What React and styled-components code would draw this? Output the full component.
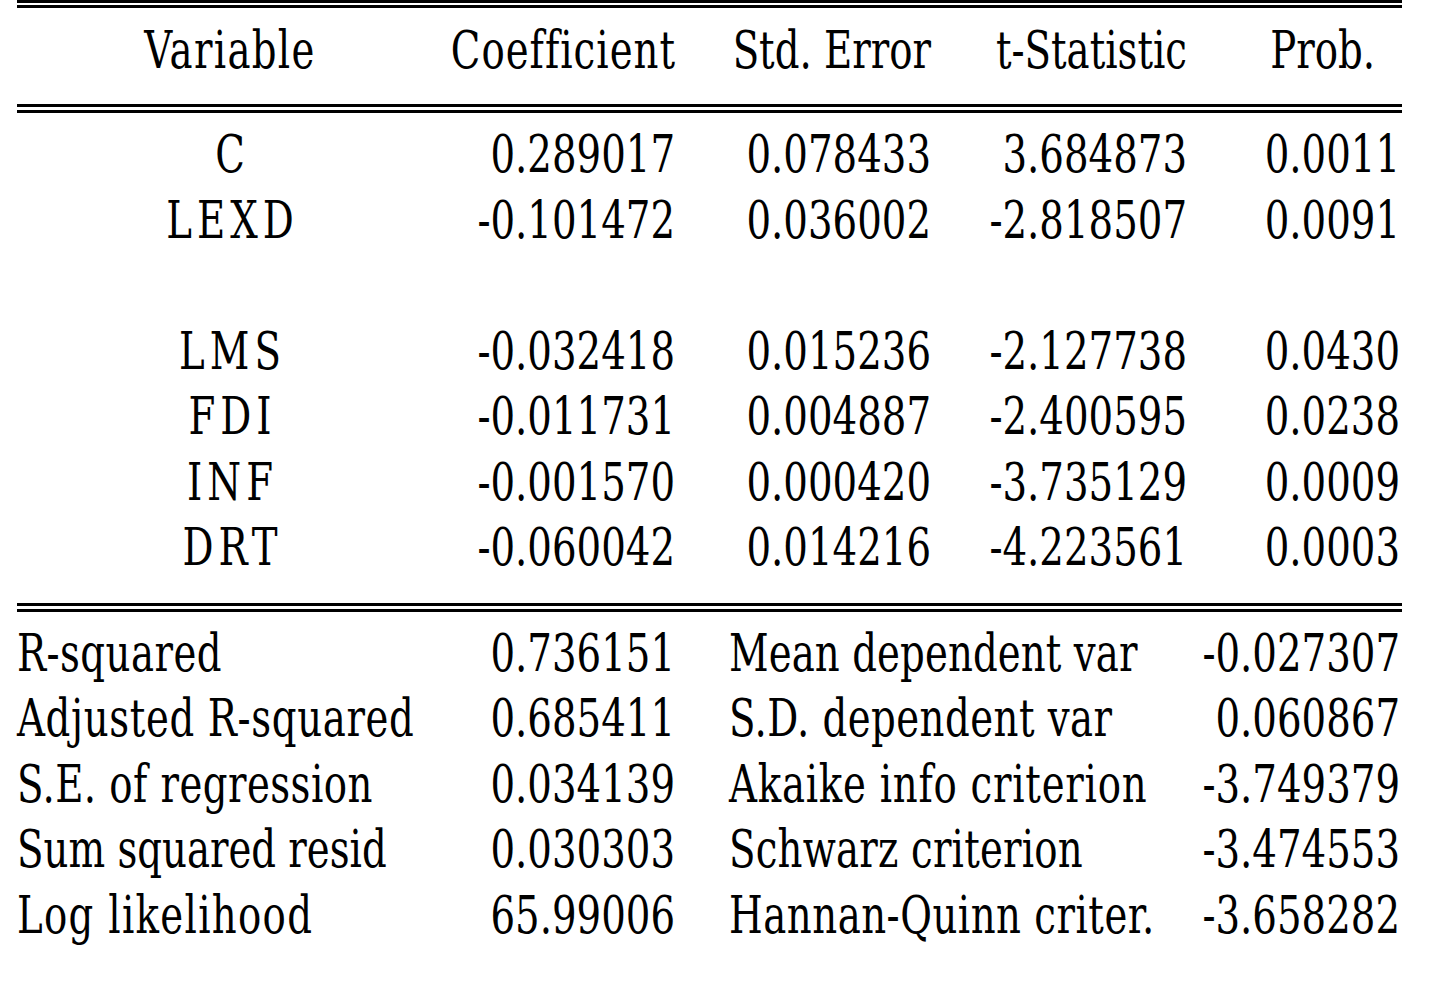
import React from 'react'
import styled, { createGlobalStyle } from 'styled-components'

const GlobalStyle = createGlobalStyle`
  html, body {
    margin: 0;
    padding: 0;
    background: #ffffff;
  }
  body {
    font-family: "DejaVu Serif Condensed", "DejaVu Serif", serif;
    font-stretch: condensed;
    color: #000000;
  }
`

// column template shared by header, coefficient rows and the stats block
const COLUMNS = '426px 232px 256px 256px 1fr'

const Table = styled.div`
  margin-left: 17px;
  width: 1385px;
  border-top: 8px double #000;
  font-size: 43px;
`

const Header = styled.div`
  display: grid;
  grid-template-columns: ${COLUMNS};
  height: 105px;
  align-items: center;
  padding: 0 2px 12px 0;
  box-sizing: border-box;
  border-bottom: 9px double #000;
`

const Section = styled.div`
  padding: ${({ $top }) => $top}px 0 ${({ $bottom }) => $bottom}px;
  border-bottom: ${({ $ruled }) => ($ruled ? '9px double #000' : 'none')};
`

const Row = styled.div`
  display: grid;
  grid-template-columns: ${COLUMNS};
  height: 65.5px;
  align-items: center;
  padding-right: 2px;
`

const Cell = styled.div`
  text-align: ${({ $align }) => $align || 'right'};
  padding-left: ${({ $pl }) => $pl || 0}px;
  padding-right: ${({ $pr }) => $pr || 0}px;
  grid-column: ${({ $span }) => ($span ? `span ${$span}` : 'auto')};
  white-space: nowrap;
  line-height: 1;
`

const Text = styled.span`
  display: inline-block;
  letter-spacing: ${({ $spacing }) => $spacing || 0}px;
  margin-right: ${({ $trim }) => ($trim ? `-${$trim}px` : 0)};
  transform: scaleY(1.2);
  transform-origin: center;
`

const VarName = styled(Text)`
  letter-spacing: 5px;
  margin-right: -5px;
`

const coefficients = [
  ['C', '0.289017', '0.078433', '3.684873', '0.0011'],
  ['LEXD', '-0.101472', '0.036002', '-2.818507', '0.0091'],
  null,
  ['LMS', '-0.032418', '0.015236', '-2.127738', '0.0430'],
  ['FDI', '-0.011731', '0.004887', '-2.400595', '0.0238'],
  ['INF', '-0.001570', '0.000420', '-3.735129', '0.0009'],
  ['DRT', '-0.060042', '0.014216', '-4.223561', '0.0003'],
]

// [label, value, spacing, label, value, spacing]
const stats = [
  ['R-squared', '0.736151', 0.45, 'Mean dependent var', '-0.027307', 0.1],
  ['Adjusted R-squared', '0.685411', 0.65, 'S.D. dependent var', '0.060867', 0.45],
  ['S.E. of regression', '0.034139', 0.45, 'Akaike info criterion', '-3.749379', 0.75],
  ['Sum squared resid', '0.030303', 0, 'Schwarz criterion', '-3.474553', 0.2],
  ['Log likelihood', '65.99006', 1.3, 'Hannan-Quinn criter.', '-3.658282', 0.5],
]

export default function App() {
  return (
    <>
      <GlobalStyle />
      <Table>
        <Header>
          <Cell $align="center"><Text $spacing={1.3}>Variable</Text></Cell>
          <Cell><Text $spacing={1} $trim={1}>Coefficient</Text></Cell>
          <Cell><Text>Std. Error</Text></Cell>
          <Cell><Text>t-Statistic</Text></Cell>
          <Cell $pr={25}><Text>Prob.</Text></Cell>
        </Header>

        <Section $top={9} $bottom={22} $ruled>
          {coefficients.map((row, i) =>
            row ? (
              <Row key={i}>
                <Cell $align="center"><VarName>{row[0]}</VarName></Cell>
                <Cell><Text>{row[1]}</Text></Cell>
                <Cell><Text>{row[2]}</Text></Cell>
                <Cell><Text>{row[3]}</Text></Cell>
                <Cell><Text>{row[4]}</Text></Cell>
              </Row>
            ) : (
              <Row key={i} />
            )
          )}
        </Section>

        <Section $top={9} $bottom={20}>
          {stats.map((row) => (
            <Row key={row[0]}>
              <Cell $align="left"><Text $spacing={row[2]}>{row[0]}</Text></Cell>
              <Cell><Text>{row[1]}</Text></Cell>
              <Cell $align="left" $pl={54} $span={2}><Text $spacing={row[5]}>{row[3]}</Text></Cell>
              <Cell><Text>{row[4]}</Text></Cell>
            </Row>
          ))}
        </Section>
      </Table>
    </>
  )
}
